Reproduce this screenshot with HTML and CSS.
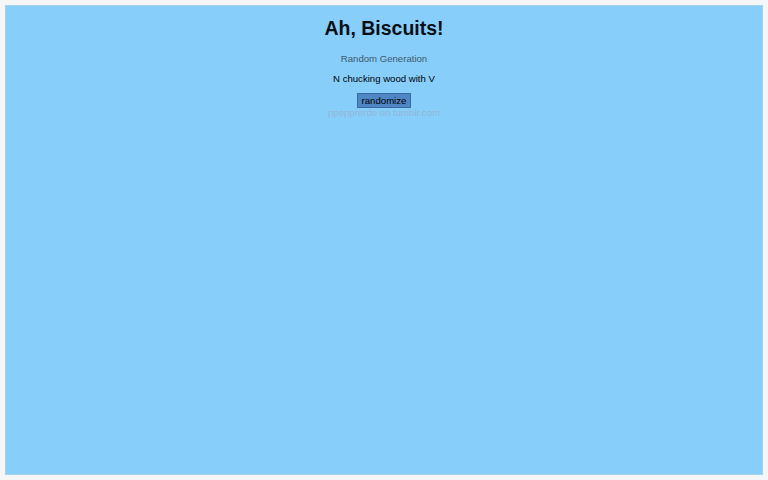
FILE: index.html
```html
<!DOCTYPE html>
<html lang="en">
<head>
    <meta charset="UTF-8">
    <title>Ah, Biscuits!</title>
    <link rel="stylesheet" href="styles.css">
</head>
<body>
    <div class="container">
        <h1>Ah, Biscuits!</h1>
        <p class="subtitle">Random Generation</p>
        <p id="result" class="result">N chucking wood with V</p>
        <button id="randomizeBtn">randomize</button>
        <a class="credit" href="#">ppepprerde on tumblr.com</a>
    </div>
</body>
</html>
```

FILE: styles.css
```css
body {
    font-family: 'Liberation Sans', Arial, sans-serif;
    margin: 0;
    padding: 5px;
    background-color: #f4f6f8;
}
.container {
    box-sizing: border-box;
    height: 470px;
    background-color: #87cefa;
    border: 1px solid #a6d4ef;
    text-align: center;
}
h1 {
    font-size: 19.5px;
    margin: 11px 0 0;
    color: #0a0f14;
}
.subtitle {
    font-size: 9.6px;
    color: #40596c;
    margin: 13px 0 0;
}
.result {
    font-size: 9.6px;
    color: #000;
    margin: 9px 0 0;
}
button {
    font-family: inherit;
    font-size: 9.6px;
    margin-top: 9px;
    padding: 1px 4px;
    background-color: #4f86c6;
    color: #000;
    border: 1px solid #3a6a9e;
    border-radius: 0;
}
.credit {
    display: block;
    margin-top: -1px;
    font-size: 9.6px;
    color: #93b6d6;
    text-decoration: none;
}
```
